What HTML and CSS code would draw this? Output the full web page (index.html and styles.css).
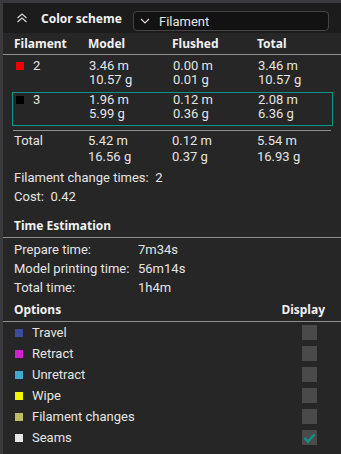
FILE: index.html
```html
<!DOCTYPE html>
<html lang="en">
<head>
    <meta charset="UTF-8">
    <meta name="viewport" content="width=device-width, initial-scale=1.0">
    <title>Preview legend</title>
    <link rel="stylesheet" href="styles.css">
</head>
<body>
    <div class="panel">
        <!-- Заголовок с выбором схемы -->
        <div class="scheme">
            <svg class="collapse" width="12" height="10" viewBox="0 0 12 10">
                <path d="M1.5 5 L6 1 L10.5 5 M1.5 9 L6 5 L10.5 9" fill="none" stroke="#d8d8d8" stroke-width="1.2"/>
            </svg>
            <span class="scheme-title">Color scheme</span>
            <div class="combo">
                <svg width="10" height="6" viewBox="0 0 10 6">
                    <path d="M1 1 L5 5 L9 1" fill="none" stroke="#d8d8d8" stroke-width="1.2"/>
                </svg>
                <span>Filament</span>
            </div>
        </div>

        <!-- Таблица расхода филамента -->
        <div class="fil-head">
            <span>Filament</span>
            <span>Model</span>
            <span>Flushed</span>
            <span>Total</span>
        </div>

        <div class="fil-row">
            <span class="fil-id"><i class="swatch" style="background:#f00000"></i>2</span>
            <span>3.46 m<br>10.57 g</span>
            <span>0.00 m<br>0.01 g</span>
            <span>3.46 m<br>10.57 g</span>
        </div>
        <div class="fil-row selected">
            <span class="fil-id"><i class="swatch" style="background:#000000"></i>3</span>
            <span>1.96 m<br>5.99 g</span>
            <span>0.12 m<br>0.36 g</span>
            <span>2.08 m<br>6.36 g</span>
        </div>

        <div class="fil-total">
            <span>Total</span>
            <span>5.42 m<br>16.56 g</span>
            <span>0.12 m<br>0.37 g</span>
            <span>5.54 m<br>16.93 g</span>
        </div>

        <div class="stats">
            <div>Filament change times:&nbsp;&nbsp;2</div>
            <div>Cost:&nbsp;&nbsp;0.42</div>
        </div>

        <!-- Время печати -->
        <div class="section-title">Time Estimation</div>
        <div class="time-list">
            <span>Prepare time:</span><span>7m34s</span>
            <span>Model printing time:</span><span>56m14s</span>
            <span>Total time:</span><span>1h4m</span>
        </div>

        <!-- Опции отображения -->
        <div class="section-title options-head">
            <span>Options</span>
            <span>Display</span>
        </div>
        <ul class="options">
            <li><i class="swatch" style="background:#3a4ba0"></i>Travel<b class="check"></b></li>
            <li><i class="swatch" style="background:#d41fd4"></i>Retract<b class="check"></b></li>
            <li><i class="swatch" style="background:#41aad1"></i>Unretract<b class="check"></b></li>
            <li><i class="swatch" style="background:#f5f500"></i>Wipe<b class="check"></b></li>
            <li><i class="swatch" style="background:#bcbc60"></i>Filament changes<b class="check"></b></li>
            <li><i class="swatch" style="background:#e6e6e6"></i>Seams<b class="check">
                <svg width="13" height="10" viewBox="0 0 13 10">
                    <path d="M1.5 5 L5 8.5 L11.5 1.5" fill="none" stroke="#0f9488" stroke-width="2.4"/>
                </svg>
            </b></li>
        </ul>
    </div>
</body>
</html>
```

FILE: styles.css
```css
body {
    margin: 0;
    background-color: #262626;
    font-family: Roboto, "Noto Sans", sans-serif;
    font-size: 13px;
    color: #e4e4e4;
}
.panel {
    border-top: 3px solid #3a3a3e;
    border-left: 3px solid #3a3a3e;
    height: 454px;
    box-sizing: border-box;
    overflow: hidden;
}
.scheme {
    display: flex;
    align-items: center;
    height: 30px;
    background-color: #1c1c1c;
    padding-left: 13px;
}
.collapse {
    margin-right: 13px;
}
.scheme-title,
.fil-head,
.section-title {
    font-family: "Noto Sans", sans-serif;
    font-weight: bold;
    font-size: 12px;
    color: #f0f0f0;
}
.combo {
    display: flex;
    align-items: center;
    width: 196px;
    height: 20px;
    box-sizing: border-box;
    border: 1px solid #444446;
    border-radius: 4px;
    background-color: #121212;
    padding-left: 6px;
    margin: 6px 12px 0 auto;
}
.combo svg {
    margin-right: 9px;
}
.fil-head,
.fil-row,
.fil-total {
    display: grid;
    grid-template-columns: 74px 84px 85px 1fr;
}
.fil-head {
    height: 21px;
    align-items: center;
    padding-left: 11px;
    border-bottom: 1px solid #8e8e8e;
    margin-bottom: 3px;
}
.fil-row {
    height: 34px;
    box-sizing: border-box;
    margin: 0 8px 0 9px;
    border: 1px solid transparent;
    padding-left: 2px;
    line-height: 14px;
}
.fil-row.selected {
    border-color: #0f9488;
}
.fil-id {
    display: flex;
    align-items: flex-start;
}
.swatch {
    display: inline-block;
    width: 8px;
    height: 8px;
    margin: 3px 9px 0 1px;
}
.fil-total {
    line-height: 16px;
    margin: 4px 10px 0 10px;
    padding: 2px 0 0 1px;
    border-top: 1px solid #8e8e8e;
}
.stats {
    padding: 3px 0 0 11px;
    line-height: 19px;
}
.section-title {
    padding-left: 11px;
    margin-top: 9px;
    height: 22px;
    line-height: 22px;
    border-bottom: 1px solid #8e8e8e;
}
.time-list {
    display: grid;
    grid-template-columns: 124px 1fr;
    padding: 2px 0 0 11px;
    line-height: 19px;
    white-space: nowrap;
}
.options-head {
    display: flex;
    justify-content: space-between;
    padding-right: 16px;
    margin-top: 2px;
}
.options {
    list-style: none;
    margin: 0;
    padding: 0 24px 0 12px;
}
.options li {
    display: flex;
    align-items: center;
    height: 21px;
}
.options li .swatch {
    margin: 0 9px 0 0;
}
.check {
    margin-left: auto;
    width: 15px;
    height: 15px;
    background-color: #4a4a4a;
    display: flex;
    align-items: center;
    justify-content: center;
}
```
